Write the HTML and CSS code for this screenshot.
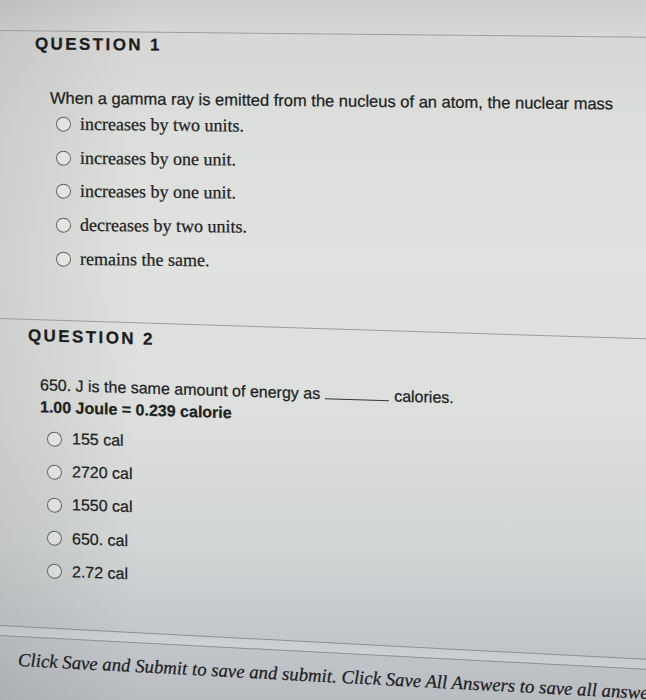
FILE: index.html
```html
<!DOCTYPE html>
<html>
<head>
<meta charset="utf-8">
<link rel="stylesheet" href="styles.css">
</head>
<body>
<div class="page">
  <section class="q q1">
    <h2 class="qhead">QUESTION 1</h2>
    <p class="qtext">When a gamma ray is emitted from the nucleus of an atom, the nuclear mass</p>
    <ul class="opts">
      <li class="opt"><span class="radio"></span><span>increases by two units.</span></li>
      <li class="opt"><span class="radio"></span><span>increases by one unit.</span></li>
      <li class="opt"><span class="radio"></span><span>increases by one unit.</span></li>
      <li class="opt"><span class="radio"></span><span>decreases by two units.</span></li>
      <li class="opt"><span class="radio"></span><span>remains the same.</span></li>
    </ul>
  </section>
  <section class="q q2">
    <h2 class="qhead">QUESTION 2</h2>
    <div class="qtext">
      <p class="line">650. J is the same amount of energy as<span class="blank"></span>calories.</p>
      <p class="line bold">1.00 Joule = 0.239 calorie</p>
    </div>
    <ul class="opts">
      <li class="opt"><span class="radio"></span><span>155 cal</span></li>
      <li class="opt"><span class="radio"></span><span>2720 cal</span></li>
      <li class="opt"><span class="radio"></span><span>1550 cal</span></li>
      <li class="opt"><span class="radio"></span><span>650. cal</span></li>
      <li class="opt"><span class="radio"></span><span>2.72 cal</span></li>
    </ul>
  </section>
  <div class="foot">
    <div class="rule"></div>
    <p class="note">Click Save and Submit to save and submit. Click Save All Answers to save all answers.</p>
  </div>
</div>
</body>
</html>
```

FILE: styles.css
```css
html, body {
  margin: 0;
  padding: 0;
}
body {
  width: 646px;
  height: 700px;
  overflow: hidden;
  color: #1e1f1f;
  -webkit-text-stroke: 0.25px #1e1f1f;
  font-family: "Liberation Sans", Arial, sans-serif;
  background:
    linear-gradient(to right, rgba(60,60,55,0.10) 0px, rgba(60,60,55,0) 140px),
    linear-gradient(to bottom, #cdcecc 0px, #d6d7d5 30px, #dcdedb 120px, #e0e2df 260px, #dcdfdd 420px, #d3d6d6 540px, #c6cacd 620px, #b9bdc2 700px);
}
.page {
  padding-top: 30px;
}
.q {
  transform-origin: 0 0;
  border-top: 1px solid #9c9e9e;
}
.q1 {
  padding: 3px 0 42.75px 35px;
  transform: skewY(0.6deg);
}
.q2 {
  padding: 6px 0 38.5px 28px;
  transform: skewY(1.8deg);
}
.qhead {
  margin: 0;
  font-size: 17px;
  line-height: 20px;
  font-weight: bold;
  letter-spacing: 2.4px;
  color: #1c1c1c;
}
.q1 .qtext {
  margin: 33px 0 0 15px;
  font-size: 16.5px;
  line-height: 20px;
}
.q2 .qtext {
  margin: 27.5px 0 0 12px;
}
.line {
  margin: 0;
  font-size: 16px;
  line-height: 22px;
}
.bold {
  font-weight: bold;
}
.blank {
  display: inline-block;
  width: 64px;
  height: 0;
  margin: 0 5px 0 5px;
  border-bottom: 1px solid #333;
}
.opts {
  list-style: none;
  margin: 0;
  padding: 0;
}
.q1 .opts {
  margin-top: -0.5px;
  padding-left: 21px;
}
.q2 .opts {
  margin-top: 4px;
  padding-left: 19px;
}
.opt {
  display: flex;
  align-items: center;
}
.q1 .opt {
  height: 33.75px;
  gap: 9px;
  font-family: "Liberation Serif", "Times New Roman", serif;
  font-size: 18px;
}
.q2 .opt {
  height: 33.2px;
  gap: 10px;
  font-size: 16px;
}
.radio {
  box-sizing: border-box;
  width: 15px;
  height: 15px;
  border: 1.5px solid #5f6263;
  border-radius: 50%;
  background: rgba(255,255,255,0.35);
  flex: none;
}
.foot {
  transform-origin: 0 0;
  transform: skewY(3deg);
}
.rule {
  height: 9px;
  border-top: 1px solid #8d9195;
  background: linear-gradient(to bottom, rgba(255,255,255,0.12), rgba(255,255,255,0.2));
}
.note {
  margin: 0;
  border-top: 1px solid #8d9195;
  padding: 11px 0 0 18px;
  font-family: "Liberation Serif", "Times New Roman", serif;
  font-style: italic;
  font-size: 18.75px;
  line-height: 24px;
  white-space: nowrap;
  color: #1c1d1f;
}
```
